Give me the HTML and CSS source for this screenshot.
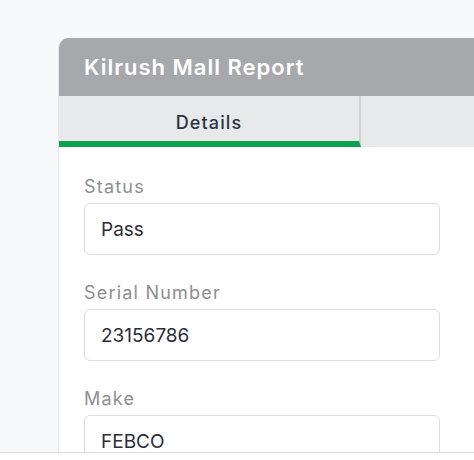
FILE: index.html
```html
<!DOCTYPE html>
<html>
<head>
<meta charset="utf-8">
<link rel="stylesheet" href="styles.css">
</head>
<body>
<div class="page">
  <main class="viewport">
    <section class="card">
      <header class="card-header">Kilrush Mall Report</header>
      <nav class="tabs">
        <div class="tab active">Details</div>
        <div class="tab"></div>
      </nav>
      <div class="form">
        <div class="field">
          <label class="label">Status</label>
          <div class="input">Pass</div>
        </div>
        <div class="field">
          <label class="label">Serial Number</label>
          <div class="input">23156786</div>
        </div>
        <div class="field">
          <label class="label">Make</label>
          <div class="input">FEBCO</div>
        </div>
      </div>
    </section>
  </main>
  <footer class="bottom"></footer>
</div>
</body>
</html>
```
FILE: styles.css
```css
* { box-sizing: border-box; }
html, body { margin: 0; padding: 0; }
body {
  width: 474px;
  height: 460px;
  overflow: hidden;
  background: #ffffff;
  font-family: "Inter", "Noto Sans", sans-serif;
}
.page {
  display: flex;
  flex-direction: column;
  height: 460px;
}
.viewport {
  height: 452px;
  flex: none;
  overflow: hidden;
  background: #f8f9fa;
  padding: 38px 0 0 58px;
}
.card {
  width: 520px;
  background: #ffffff;
  border-left: 1px solid #e4e5e7;
  border-radius: 10px 0 0 0;
  overflow: hidden;
  height: 600px;
}
.card-header {
  height: 58px;
  background: #a7a8ab;
  color: #ffffff;
  font-size: 22px;
  font-weight: 600;
  padding: 16px 0 0 25px;
  letter-spacing: 1px;
}
.tabs {
  display: flex;
  height: 51px;
  background: #e8e9eb;
}
.tab {
  flex: 1;
  display: flex;
  align-items: center;
  justify-content: center;
  font-size: 18px;
  font-weight: 500;
  color: #2e3142;
  letter-spacing: 1.1px;
}
.tab.active {
  flex: none;
  width: 302px;
  border-right: 2px solid #cdced1;
  border-bottom: 6px solid #0fa24c;
  padding-top: 8px;
}
.form {
  padding: 29px 0 0 25px;
  display: flex;
  flex-direction: column;
  gap: 27px;
}
.field {
  display: flex;
  flex-direction: column;
  gap: 5px;
}
.label {
  font-size: 18px;
  color: #8d8e91;
  line-height: 22px;
  letter-spacing: 1.2px;
}
.input {
  width: 356px;
  height: 52px;
  border: 1px solid #dcdddf;
  border-radius: 6px;
  padding: 0 16px;
  display: flex;
  align-items: center;
  font-size: 19px;
  color: #2b2d3a;
}
.bottom {
  flex: 1;
  border-top: 1px solid #d9dadc;
  background: #ffffff;
}
```
